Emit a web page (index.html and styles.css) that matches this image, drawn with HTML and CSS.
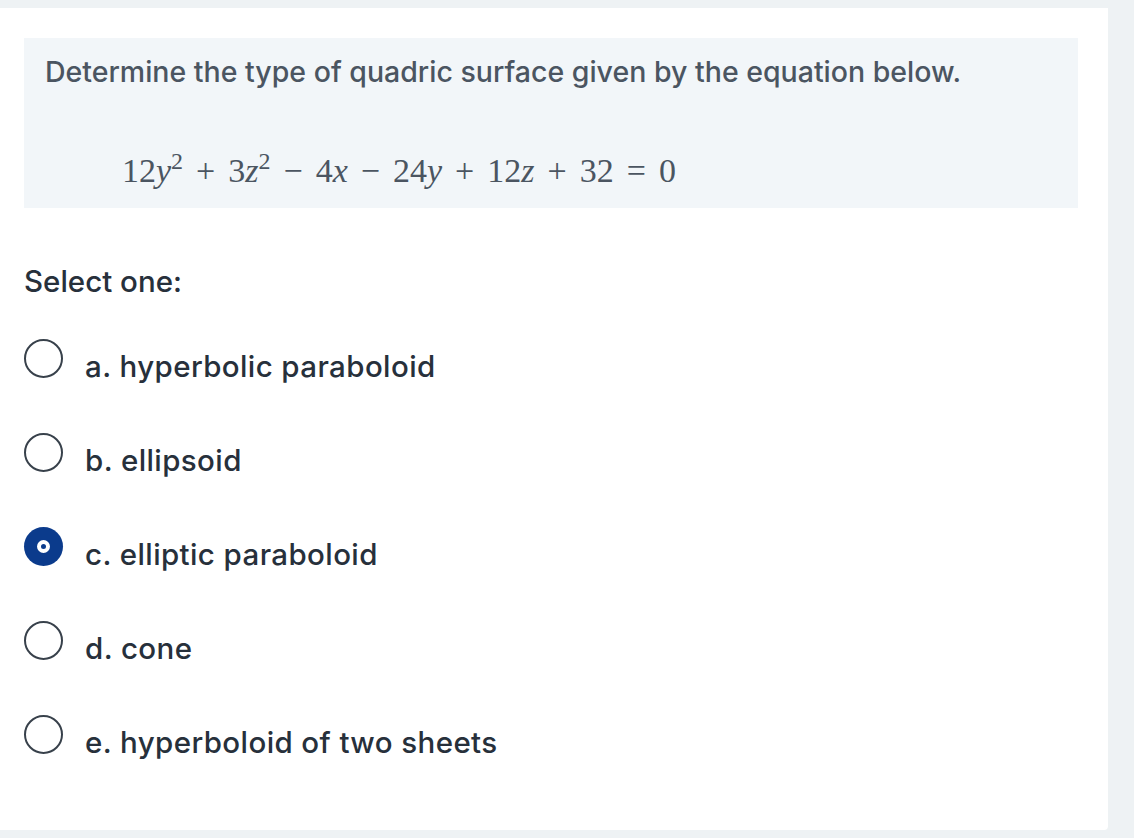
FILE: index.html
```html
<!DOCTYPE html>
<html lang="en">
<head>
<meta charset="utf-8">
<title>Quadric surface question</title>
<link rel="stylesheet" href="styles.css">
</head>
<body>
<div class="page">
  <div class="card">
    <div class="qtext">
      <p class="prompt">Determine the type of quadric surface given by the equation below.</p>
      <p class="equation"><span class="n">12</span><i>y</i><sup>2</sup><span class="op">+</span><span class="n">3</span><i>z</i><sup>2</sup><span class="op">−</span><span class="n">4</span><i>x</i><span class="op">−</span><span class="n">24</span><i>y</i><span class="op">+</span><span class="n">12</span><i>z</i><span class="op">+</span><span class="n">32</span><span class="op">=</span><span class="n">0</span></p>
    </div>
    <div class="select">Select one:</div>
    <div class="answers">
      <label class="option"><span class="radio"></span><span class="label">a. hyperbolic paraboloid</span></label>
      <label class="option"><span class="radio"></span><span class="label">b. ellipsoid</span></label>
      <label class="option"><span class="radio checked"></span><span class="label">c. elliptic paraboloid</span></label>
      <label class="option"><span class="radio"></span><span class="label">d. cone</span></label>
      <label class="option"><span class="radio"></span><span class="label">e. hyperboloid of two sheets</span></label>
    </div>
  </div>
</div>
</body>
</html>
```
FILE: styles.css
```css
html, body {
  margin: 0;
  padding: 0;
  background: #eef2f4;
}
body {
  font-family: "Inter", "Open Sans", sans-serif;
  font-weight: 500;
}
.page {
  padding: 8px 26px 8px 0;
}
.card {
  background: #ffffff;
  height: 822px;
  box-sizing: border-box;
  border-radius: 0 0 4px 0;
  padding: 30px 30px 0 24px;
}
.qtext {
  background: #f2f6f9;
  height: 170px;
  box-sizing: border-box;
  padding: 17px 20px 0 21px;
}
.prompt {
  margin: 0;
  font-size: 28.5px;
  line-height: 34px;
  color: #4b5561;
}
.equation {
  margin: 62px 0 0 77px;
  font-family: "Liberation Serif", "Times New Roman", serif;
  font-weight: 400;
  font-size: 34px;
  line-height: 40px;
  color: #4b5561;
  white-space: nowrap;
}
.equation i {
  font-style: italic;
}
.equation sup {
  font-size: 24px;
  line-height: 0;
  vertical-align: 13px;
}
.equation .op {
  margin: 0 13px;
}
.select {
  margin-top: 55px;
  font-size: 29.5px;
  line-height: 36px;
  color: #27303b;
}
.answers {
  margin-top: 39px;
  display: flex;
  flex-direction: column;
  gap: 54px;
}
.option {
  display: flex;
  align-items: center;
  height: 40px;
}
.radio {
  width: 39px;
  height: 39px;
  border: 2px solid #38414b;
  border-radius: 50%;
  box-sizing: border-box;
  margin: 0 22px 0 0;
  flex: none;
  position: relative;
}
.radio.checked {
  border: none;
  background: #0b3b8c;
}
.radio.checked::after {
  content: "";
  position: absolute;
  left: 13px;
  top: 13px;
  width: 5px;
  height: 5px;
  border: 4px solid #ffffff;
  border-radius: 50%;
  background: #0b3b8c;
}
.label {
  font-size: 29.5px;
  line-height: 36px;
  letter-spacing: 0.4px;
  color: #27303b;
  padding-top: 16px;
}
```
